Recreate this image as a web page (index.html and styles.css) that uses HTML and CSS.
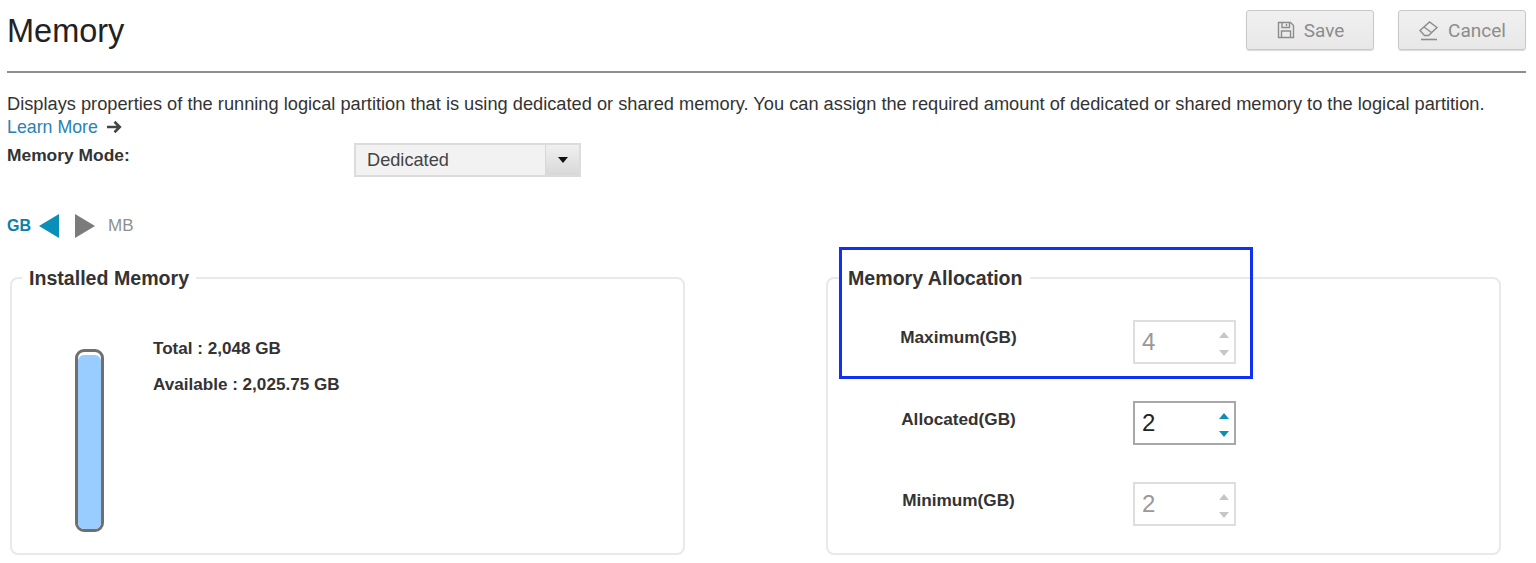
FILE: index.html
```html
<!DOCTYPE html>
<html lang="en">
<head>
<meta charset="utf-8">
<title>Memory</title>
<link rel="stylesheet" href="styles.css">
</head>
<body>
<main class="page">
  <header class="header">
    <h1 class="title">Memory</h1>
    <div class="actions">
      <button class="btn" type="button" disabled>
        <svg class="btn-icon" viewBox="0 0 20 20" aria-hidden="true"><path d="M2.500 2.500h12l3 3v12h-15z M6 2.500v5h7.500v-5 M5.500 17.500v-6.500h9v6.500 M10.500 4v2" fill="none" stroke="#8c8c8c" stroke-width="1.400"/></svg>
        Save
      </button>
      <button class="btn" type="button" disabled>
        <svg class="btn-icon btn-icon-wide" viewBox="0 0 22 22" aria-hidden="true"><path d="M2 11.500 11.500 3l7.500 5.500-8.500 8h-4z M6 8l7.500 5.500" fill="none" stroke="#8c8c8c" stroke-width="1.400"/><path d="M3 20.500h16" stroke="#8c8c8c" stroke-width="1.600"/></svg>
        Cancel
      </button>
    </div>
  </header>

  <p class="intro">Displays properties of the running logical partition that is using dedicated or shared memory. You can assign the required amount of dedicated or shared memory to the logical partition.</p>
  <a class="learn" href="#">Learn More <svg class="learn-arrow" viewBox="0 0 16 14" aria-hidden="true"><path d="M1 7h12.500M8.500 1.800 13.800 7l-5.300 5.200" fill="none" stroke="#444" stroke-width="2.600"/></svg></a>

  <div class="mode">
    <span class="mode-label">Memory Mode:</span>
    <div class="select">
      <span class="select-value">Dedicated</span>
      <span class="select-btn"><svg class="select-caret" viewBox="0 0 10 6" aria-hidden="true"><path d="M0 0h10L5 6z" fill="#111"/></svg></span>
    </div>
  </div>

  <div class="units">
    <span class="unit-on">GB</span>
    <svg class="tri" viewBox="0 0 20 24" aria-hidden="true"><path d="M20 0v24L0 12z" fill="#0a8fb8"/></svg>
    <svg class="tri tri-off" viewBox="0 0 20 24" aria-hidden="true"><path d="M0 0v24l20-12z" fill="#7b7b7b"/></svg>
    <span class="unit-off">MB</span>
  </div>

  <div class="panels">
    <fieldset class="panel">
      <legend class="legend">Installed Memory</legend>
      <div class="installed">
        <div class="gauge"><div class="gauge-fill"></div></div>
        <div class="stats">
          <div class="stat">Total : 2,048 GB</div>
          <div class="stat">Available : 2,025.75 GB</div>
        </div>
      </div>
    </fieldset>

    <fieldset class="panel">
      <legend class="legend">Memory Allocation</legend>
      <div class="alloc">
        <div class="row">
          <span class="row-label">Maximum(GB)</span>
          <div class="spin spin-off"><span>4</span><span class="arrows"><i class="up"></i><i class="down"></i></span></div>
        </div>
        <div class="row">
          <span class="row-label row-label-low">Allocated(GB)</span>
          <div class="spin spin-on"><span>2</span><span class="arrows"><i class="up"></i><i class="down"></i></span></div>
        </div>
        <div class="row">
          <span class="row-label row-label-low">Minimum(GB)</span>
          <div class="spin spin-off"><span>2</span><span class="arrows"><i class="up"></i><i class="down"></i></span></div>
        </div>
      </div>
    </fieldset>
  </div>
</main>
<div class="highlight"></div>
</body>
</html>
```
FILE: styles.css
```css
* { box-sizing: border-box; }
html, body { margin: 0; height: 100%; overflow: hidden; background: #fff; }
body { font-family: "Liberation Sans", Arial, sans-serif; color: #333; font-size: 17.200px; }
.page { padding: 0 10px 0 7px; }

.header { display: flex; justify-content: space-between; height: 73px; padding-top: 10px; border-bottom: 2px solid #8e8e8e; }
.title { margin: 0; font-size: 32.500px; line-height: 42px; font-weight: 400; color: #222; }
.actions { display: flex; gap: 24px; }
.btn { display: flex; align-items: center; justify-content: center; gap: 8px; width: 128px; height: 40px; padding: 0; border: 1px solid #c8c8c8; border-radius: 3px; background: linear-gradient(#f0f0f0, #e8e8e8); color: #8c8c8c; font: 19px "Roboto", "Liberation Sans", sans-serif; box-shadow: 0 1px 1px rgba(0,0,0,.15); }
.btn-icon { width: 20px; height: 20px; }
.btn-icon-wide { width: 22px; height: 22px; }

.intro { margin: 21px 0 0; font-size: 18.240px; line-height: 20px; color: #333; white-space: nowrap; }
.learn { display: flex; align-items: center; gap: 8px; margin-top: 3px; line-height: 20px; font-size: 17.800px; color: #2a82b4; text-decoration: none; }
.learn-arrow { width: 16px; height: 14px; }

.mode { display: flex; align-items: flex-start; margin-top: 1px; }
.mode-label { width: 347px; margin-top: 7px; font-size: 17.400px; font-weight: 700; line-height: 20px; color: #333; }
.select { display: flex; width: 227px; height: 34px; margin-top: 5px; border: 2px solid #dcdcdc; background: #f2f2f2; }
.select-value { flex: 1; padding-left: 11px; line-height: 31px; font-size: 18.200px; color: #444; }
.select-btn { display: flex; align-items: center; justify-content: center; width: 34px; border-left: 1px solid #d8d8d8; background: linear-gradient(#f0f0f0, #d8d8d8); }
.select-caret { width: 10px; height: 6px; }

.units { display: flex; align-items: center; height: 26px; margin-top: 36px; font-size: 16px; }
.unit-on { color: #0a7fa8; font-weight: 700; margin-right: 8px; }
.unit-off { color: #8f8f8f; margin-left: 13px; font-size: 17px; }
.tri { width: 20px; height: 24px; }
.tri-off { margin-left: 16px; }

.panels { display: flex; gap: 141px; margin: 28px 0 0 3px; }
.panel { width: 675px; height: 288px; margin: 0; padding: 0; border: 2px solid #e9e9e9; border-radius: 8px; min-width: 0; }
.legend { margin-left: 10px; padding: 0 7px; font-size: 19.600px; line-height: 22px; font-weight: 700; color: #333; }
.panel + .panel .legend { margin-left: 13px; }

.installed { display: flex; padding: 60px 0 0 63px; }
.gauge { width: 29px; height: 183px; border: 3px solid #6f6f6f; border-radius: 9px; padding-top: 3px; background: #fff; }
.gauge-fill { height: 100%; background: #99ccff; border-radius: 6px; }
.stats { margin: -10px 0 0 49px; }
.stat { font-size: 17.100px; font-weight: 700; line-height: 20px; margin-bottom: 16px; color: #333; }

.alloc { display: flex; flex-direction: column; gap: 37px; padding-top: 31px; }
.row { display: flex; align-items: flex-start; height: 44px; }
.row-label { width: 305px; padding-right: 44px; text-align: center; font-weight: 700; line-height: 34px; color: #333; }
.row-label-low { line-height: 36px; }
.spin { display: flex; align-items: center; justify-content: space-between; width: 103px; height: 44px; padding: 0 5px 0 7px; font-size: 24px; }
.spin-off { border: 2px solid #dedede; color: #999; }
.spin-on { border: 2px solid #a8a8a8; color: #222; }
.arrows { display: flex; flex-direction: column; gap: 12px; padding-top: 4px; }
.up, .down { display: block; width: 0; height: 0; border-left: 5px solid transparent; border-right: 5px solid transparent; }
.up { border-bottom: 6px solid #c6c6c6; }
.down { border-top: 6px solid #c6c6c6; }
.spin-on .up { border-bottom-color: #0a8fb8; }
.spin-on .down { border-top-color: #0a8fb8; }

.highlight { position: absolute; left: 839px; top: 247px; width: 414px; height: 132px; border: 3px solid #0f31f5; pointer-events: none; }
```
